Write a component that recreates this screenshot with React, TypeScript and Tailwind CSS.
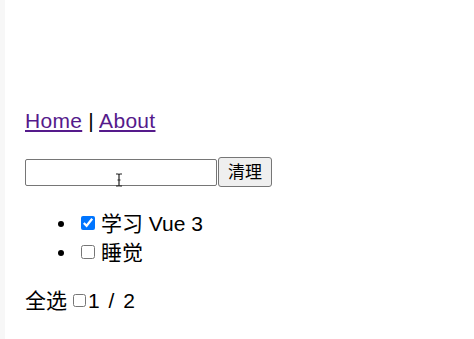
import React from "react";

export default function App() {
  const font = { fontFamily: '"Liberation Sans", Arial, "Noto Sans CJK SC", sans-serif' };
  return (
    <div className="flex min-h-[339px] w-[474px] bg-white text-black" style={font}>
      <div className="w-[5px] shrink-0 bg-[#f7f7f7]" />
      <div className="relative flex-1 pl-[20px] pt-[108px] text-[21px]">
        <nav className="leading-[25px] tracking-[0.3px]">
          <a href="#" className="text-[#551a8b] underline">Home</a>
          <span> | </span>
          <a href="#" className="text-[#551a8b] underline">About</a>
        </nav>
        <div className="mt-[24px] flex items-center">
          <input
            type="text"
            className="h-[27px] w-[192px] rounded-[2px] border border-[#767676] bg-white px-1 text-[17px] outline-none"
          />
          <button className="ml-[1px] h-[30px] w-[54px] rounded-[3px] border border-[#767676] bg-[#efefef] text-[17px] leading-none">
            清理
          </button>
        </div>
        <ul className="mt-[21px] list-disc pl-[52px]">
          <li className="h-[29px] leading-[29px]">
            <label className="inline-flex items-center">
              <input type="checkbox" defaultChecked className="ml-[4px] mr-[6px] h-[14px] w-[14px]" />
              <span>学习 Vue 3</span>
            </label>
          </li>
          <li className="h-[29px] leading-[29px]">
            <label className="inline-flex items-center">
              <input type="checkbox" className="ml-[4px] mr-[6px] h-[14px] w-[14px]" />
              <span>睡觉</span>
            </label>
          </li>
        </ul>
        <div className="mt-[22px] flex items-center leading-[25px]">
          <span>全选</span>
          <input type="checkbox" className="ml-[6px] mr-[2px] h-[13px] w-[13px]" />
          <span className="[word-spacing:3px]">1 / 2</span>
        </div>
        <svg
          className="pointer-events-none absolute left-[110px] top-[173px]"
          width="8"
          height="14"
          viewBox="0 0 8 14"
        >
          <path d="M1 1 H3 Q4 1.5 5 1 H7 M4 1.5 V12.5 M1 13 H3 Q4 12.5 5 13 H7" stroke="#222" strokeWidth="1.2" fill="none" />
          <path d="M2.5 7 H5.5" stroke="#222" strokeWidth="1" />
        </svg>
      </div>
    </div>
  );
}
